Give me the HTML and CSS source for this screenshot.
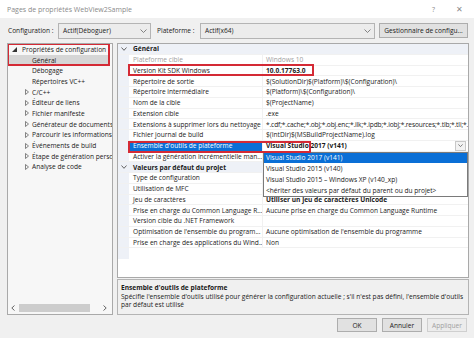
FILE: index.html
```html
<!DOCTYPE html>
<html lang="fr">
<head>
<meta charset="utf-8">
<title>Pages de propriétés WebView2Sample</title>
<link rel="stylesheet" href="styles.css">
</head>
<body>
<div class="dialog">
  <div class="titlebar">
    <span class="title">Pages de propriétés WebView2Sample</span>
    <span class="tb-btn help">?</span>
    <span class="tb-btn close">✕</span>
  </div>

  <div class="configbar">
    <span class="lbl lbl-config">Configuration :</span>
    <div class="combo combo-config"><span>Actif(Déboguer)</span><svg class="chev" width="7" height="4" viewBox="0 0 7 4"><path d="M0.5 0.5 L3.5 3.5 L6.5 0.5" fill="none" stroke="#777" stroke-width="0.9"/></svg></div>
    <span class="lbl lbl-plat">Plateforme :</span>
    <div class="combo combo-plat"><span>Actif(x64)</span><svg class="chev" width="7" height="4" viewBox="0 0 7 4"><path d="M0.5 0.5 L3.5 3.5 L6.5 0.5" fill="none" stroke="#777" stroke-width="0.9"/></svg></div>
    <button class="btn btn-manager">Gestionnaire de configu...</button>
  </div>

  <div class="main">
    <div class="tree">
      <div class="tree-items">
        <div class="hl">
          <div class="titem root"><svg class="exp" width="5" height="5" viewBox="0 0 5 5"><path d="M5 0 L5 5 L0 5 Z" fill="#333"/></svg><span>Propriétés de configuration</span></div>
          <div class="titem child sel"><span>Général</span></div>
        </div>
        <div class="titem child"><span>Débogage</span></div>
        <div class="titem child"><span>Répertoires VC++</span></div>
        <div class="titem parent"><svg class="col" width="4" height="6" viewBox="0 0 4 6"><path d="M0.5 0.5 L3.5 3 L0.5 5.5 Z" fill="none" stroke="#666" stroke-width="0.8"/></svg><span>C/C++</span></div>
        <div class="titem parent"><svg class="col" width="4" height="6" viewBox="0 0 4 6"><path d="M0.5 0.5 L3.5 3 L0.5 5.5 Z" fill="none" stroke="#666" stroke-width="0.8"/></svg><span>Éditeur de liens</span></div>
        <div class="titem parent"><svg class="col" width="4" height="6" viewBox="0 0 4 6"><path d="M0.5 0.5 L3.5 3 L0.5 5.5 Z" fill="none" stroke="#666" stroke-width="0.8"/></svg><span>Fichier manifeste</span></div>
        <div class="titem parent"><svg class="col" width="4" height="6" viewBox="0 0 4 6"><path d="M0.5 0.5 L3.5 3 L0.5 5.5 Z" fill="none" stroke="#666" stroke-width="0.8"/></svg><span>Générateur de documents</span></div>
        <div class="titem parent"><svg class="col" width="4" height="6" viewBox="0 0 4 6"><path d="M0.5 0.5 L3.5 3 L0.5 5.5 Z" fill="none" stroke="#666" stroke-width="0.8"/></svg><span>Parcourir les informations</span></div>
        <div class="titem parent"><svg class="col" width="4" height="6" viewBox="0 0 4 6"><path d="M0.5 0.5 L3.5 3 L0.5 5.5 Z" fill="none" stroke="#666" stroke-width="0.8"/></svg><span>Événements de build</span></div>
        <div class="titem parent"><svg class="col" width="4" height="6" viewBox="0 0 4 6"><path d="M0.5 0.5 L3.5 3 L0.5 5.5 Z" fill="none" stroke="#666" stroke-width="0.8"/></svg><span>Étape de génération perso</span></div>
        <div class="titem parent"><svg class="col" width="4" height="6" viewBox="0 0 4 6"><path d="M0.5 0.5 L3.5 3 L0.5 5.5 Z" fill="none" stroke="#666" stroke-width="0.8"/></svg><span>Analyse de code</span></div>
      </div>
      <div class="hscroll">
        <svg class="arr" width="4" height="6" viewBox="0 0 4 6"><path d="M3.5 0.5 L0.8 3 L3.5 5.5" fill="none" stroke="#555" stroke-width="0.9"/></svg>
        <div class="track"><div class="thumb"></div></div>
        <svg class="arr" width="4" height="6" viewBox="0 0 4 6"><path d="M0.5 0.5 L3.2 3 L0.5 5.5" fill="none" stroke="#555" stroke-width="0.9"/></svg>
      </div>
    </div>

    <div class="right">
      <div class="grid">
        <div class="row header"><div class="gut"><svg width="6" height="4" viewBox="0 0 6 4"><path d="M0.5 0.5 L3 3.3 L5.5 0.5" fill="none" stroke="#555" stroke-width="0.9"/></svg></div><div class="htext">Général</div></div>
        <div class="row"><div class="gut"></div><div class="name ro">Plateforme cible</div><div class="val ro">Windows 10</div></div>
        <div class="row"><div class="gut"></div><div class="name">Version Kit SDK Windows</div><div class="val b">10.0.17763.0</div></div>
        <div class="row"><div class="gut"></div><div class="name">Répertoire de sortie</div><div class="val">$(SolutionDir)$(Platform)\$(Configuration)\</div></div>
        <div class="row"><div class="gut"></div><div class="name">Répertoire intermédiaire</div><div class="val">$(Platform)\$(Configuration)\</div></div>
        <div class="row"><div class="gut"></div><div class="name">Nom de la cible</div><div class="val">$(ProjectName)</div></div>
        <div class="row"><div class="gut"></div><div class="name">Extension cible</div><div class="val">.exe</div></div>
        <div class="row"><div class="gut"></div><div class="name">Extensions à supprimer lors du nettoyage</div><div class="val tight">*.cdf;*.cache;*.obj;*.obj.enc;*.ilk;*.ipdb;*.iobj;*.resources;*.tlb;*.tli;*.t</div></div>
        <div class="row"><div class="gut"></div><div class="name">Fichier journal de build</div><div class="val">$(IntDir)$(MSBuildProjectName).log</div></div>
        <div class="row"><div class="gut"></div><div class="name selname">Ensemble d'outils de plateforme</div><div class="val b withbtn"><span>Visual Studio 2017 (v141)</span><span class="ddbtn"><svg width="5" height="3" viewBox="0 0 5 3"><path d="M0.4 0.4 L2.5 2.6 L4.6 0.4" fill="none" stroke="#666" stroke-width="0.8"/></svg></span></div></div>
        <div class="row"><div class="gut"></div><div class="name">Activer la génération incrémentielle man...</div><div class="val"></div></div>
        <div class="row header"><div class="gut"><svg width="6" height="4" viewBox="0 0 6 4"><path d="M0.5 0.5 L3 3.3 L5.5 0.5" fill="none" stroke="#555" stroke-width="0.9"/></svg></div><div class="htext">Valeurs par défaut du projet</div></div>
        <div class="row"><div class="gut"></div><div class="name">Type de configuration</div><div class="val"></div></div>
        <div class="row"><div class="gut"></div><div class="name">Utilisation de MFC</div><div class="val"></div></div>
        <div class="row"><div class="gut"></div><div class="name">Jeu de caractères</div><div class="val b">Utiliser un jeu de caractères Unicode</div></div>
        <div class="row"><div class="gut"></div><div class="name">Prise en charge du Common Language R...</div><div class="val">Aucune prise en charge du Common Language Runtime</div></div>
        <div class="row"><div class="gut"></div><div class="name">Version cible du .NET Framework</div><div class="val"></div></div>
        <div class="row"><div class="gut"></div><div class="name">Optimisation de l'ensemble du program...</div><div class="val">Aucune optimisation de l'ensemble du programme</div></div>
        <div class="row"><div class="gut"></div><div class="name">Prise en charge des applications du Wind...</div><div class="val">Non</div></div>
        <div class="row empty"><div class="gut"></div></div>

        <div class="dropdown">
          <div class="ditem dsel">Visual Studio 2017 (v141)</div>
          <div class="ditem">Visual Studio 2015 (v140)</div>
          <div class="ditem">Visual Studio 2015 – Windows XP (v140_xp)</div>
          <div class="ditem">&lt;hériter des valeurs par défaut du parent ou du projet&gt;</div>
        </div>
        <div class="redbox rb-sdk"></div>
        <div class="redbox rb-tools"></div>
      </div>
      <div class="desc">
        <div class="desc-title">Ensemble d'outils de plateforme</div>
        <div class="desc-text">Spécifie l'ensemble d'outils utilisé pour générer la configuration actuelle ; s'il n'est pas défini, l'ensemble d'outils</div>
        <div class="desc-text">par défaut est utilisé</div>
      </div>
    </div>
  </div>

  <div class="footer">
    <button class="btn fbtn">OK</button>
    <button class="btn fbtn">Annuler</button>
    <button class="btn fbtn disabled">Appliquer</button>
  </div>
</div>
</body>
</html>
```

FILE: styles.css
```css
* { box-sizing: border-box; }
html, body { margin: 0; padding: 0; }
body {
  width: 474px;
  height: 338px;
  overflow: hidden;
  background: #f0f0f0;
  font-family: "Open Sans", "Noto Sans", "Liberation Sans", sans-serif;
  font-size: 6.6px;
  color: #1a1a1a;
}
.dialog { width: 474px; height: 338px; display: flex; flex-direction: column; }

/* title bar */
.titlebar {
  height: 18px;
  background: #ffffff;
  display: flex;
  align-items: center;
  padding-left: 7px;
  color: #8a8a8a;
  font-size: 7px;
}
.title { flex: 1; }
.tb-btn { color: #8a8a8a; font-size: 7px; }
.help { margin-right: 21px; }
.close { margin-right: 11px; font-size: 7.5px; }

/* configuration bar */
.configbar {
  height: 25px;
  display: flex;
  align-items: center;
  padding-left: 8px;
}
.lbl-config { width: 50px; }
.lbl-plat { width: 43px; margin-left: 6px; }
.combo {
  height: 16px;
  border: 1px solid #b4b4b4;
  background: #ececec;
  display: flex;
  align-items: center;
  padding: 0 3px 0 4px;
}
.combo span { flex: 1; }
.combo-config { width: 93px; }
.combo-plat { width: 175px; }
.chev { display: block; }
.btn {
  font-family: inherit;
  font-size: 6.6px;
  color: #1a1a1a;
  background: #e1e1e1;
  border: 1px solid #adadad;
  padding: 0;
  margin: 0;
}
.btn-manager { width: 89px; height: 15px; margin-left: 4px; }

/* main */
.main {
  height: 272px;
  display: flex;
  padding-left: 7px;
  gap: 4px;
}

/* tree */
.tree {
  width: 106px;
  flex: none;
  border: 1px solid #a9a9a9;
  background: #f7f7f7;
  display: flex;
  flex-direction: column;
  overflow: hidden;
}
.tree-items { flex: 1; min-width: 0; }
.hl { outline: 2px solid #d42a35; outline-offset: -1px; margin-right: 3px; }
.titem {
  height: 10.7px;
  display: flex;
  align-items: center;
  white-space: nowrap;
  overflow: hidden;
}
.titem svg { flex: none; }
.titem span { flex: none; }
.titem.root { padding-left: 4px; }
.titem.root .exp { margin-right: 5px; }
.titem.child { padding-left: 24px; }
.titem.sel { background: #d6d6d6; }
.titem.parent { padding-left: 17px; }
.titem.parent .col { margin-right: 3px; }
.hscroll {
  height: 10px;
  margin-bottom: 1px;
  display: flex;
  align-items: center;
  padding: 0 5px 0 3px;
}
.track { flex: 1; height: 8px; margin: 0 4px; }
.thumb { width: 71px; height: 8px; background: #cdcdcd; }
.arr { display: block; }

/* right side */
.right { width: 352px; display: flex; flex-direction: column; gap: 1px; }
.grid {
  position: relative;
  height: 235px;
  border: 1px solid #a9a9a9;
  background: #ffffff;
  overflow: hidden;
}
.row {
  height: 10.75px;
  display: flex;
  white-space: nowrap;
  border-bottom: 1px solid #f1f1f1;
}
.row.empty { border-bottom: none; }
.gut {
  width: 11px;
  flex: none;
  background: #eef1f7;
  display: flex;
  align-items: center;
  justify-content: center;
}
.header { background: #eef1f7; }
.htext { padding-left: 4px; font-weight: bold; display: flex; align-items: center; }
.name {
  width: 134px;
  flex: none;
  padding-left: 4px;
  overflow: hidden;
  display: flex;
  align-items: center;
  border-right: 1px solid #f1f1f1;
}
.val {
  flex: 1;
  min-width: 0;
  padding-left: 3px;
  overflow: hidden;
  display: flex;
  align-items: center;
}
.tight { letter-spacing: -0.12px; }
.ro { color: #a0a0a0; }
.b { font-weight: bold; }
.selname { background: #0a6fd6; color: #ffffff; }
.withbtn span:first-child { flex: 1; }
.ddbtn {
  width: 11px;
  height: 10px;
  flex: none;
  margin-right: 2px;
  border: 1px solid #c8c8c8;
  background: #f2f2f2;
  display: flex;
  align-items: center;
  justify-content: center;
}

.dropdown {
  position: absolute;
  left: 145px;
  top: 107.5px;
  width: 205px;
  background: #ffffff;
  border: 1px solid #7a7a7a;
}
.ditem {
  height: 10.75px;
  display: flex;
  align-items: center;
  padding-left: 2px;
  white-space: nowrap;
}
.dsel { background: #0a6fd6; color: #ffffff; }

.redbox {
  position: absolute;
  border: 2px solid #d42a35;
  pointer-events: none;
}
.rb-sdk { left: 10px; top: 20px; width: 186px; height: 12px; }
.rb-tools { left: 10px; top: 96.5px; width: 183px; height: 12px; }

/* description */
.desc {
  flex: 1;
  border: 1px solid #b4b4b4;
  background: #f0f0f0;
  padding: 3px 3px 0 3px;
  white-space: nowrap;
  overflow: hidden;
}
.desc-title { font-weight: bold; height: 9.5px; line-height: 9.5px; }
.desc-text { height: 8.5px; line-height: 8.5px; }

/* footer */
.footer {
  flex: 1;
  display: flex;
  justify-content: flex-end;
  align-items: flex-start;
  padding-top: 3px;
  padding-right: 7px;
  gap: 5px;
}
.fbtn { width: 40px; height: 14px; }
.disabled { color: #a0a0a0; background: #ececec; border-color: #cfcfcf; }
```
